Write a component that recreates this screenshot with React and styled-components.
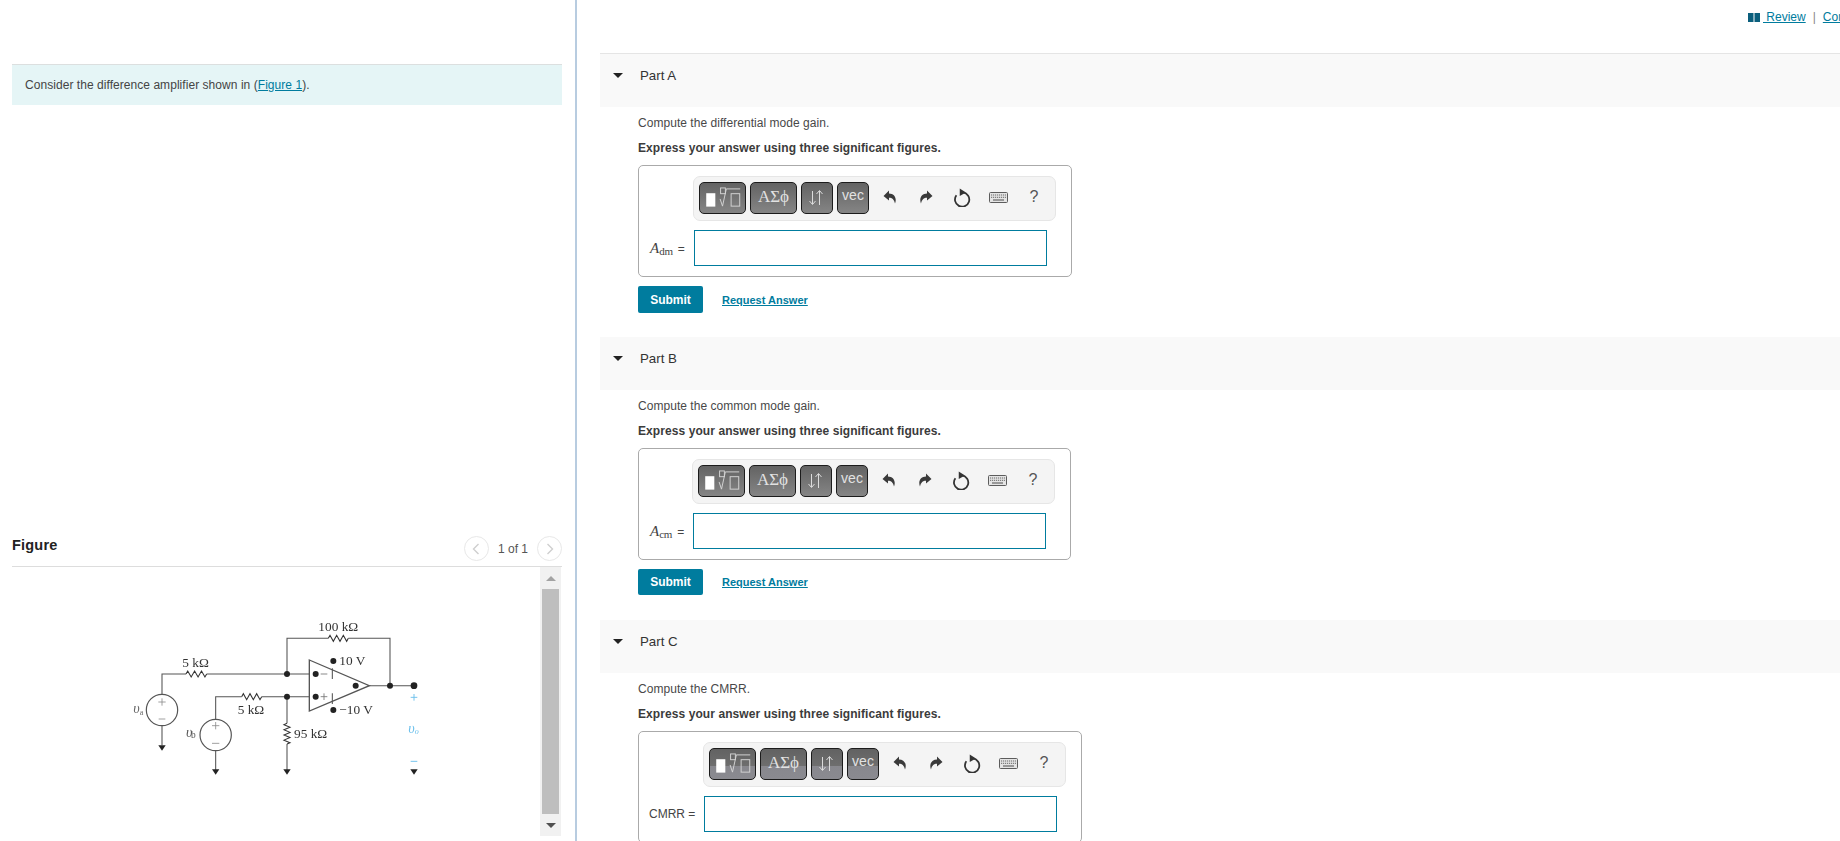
import React from "react";
import styled, { createGlobalStyle } from "styled-components";

const Global = createGlobalStyle`
  html, body { margin: 0; padding: 0; background: #fff; overflow: hidden; }
  body { font-family: "Liberation Sans", Arial, sans-serif; font-size: 12px; color: #444; }
`;

const Page = styled.div`
  display: flex;
  width: 1840px;
  height: 841px;
  overflow: hidden;
`;

const LeftColumn = styled.div`
  width: 575px;
  flex: none;
  display: flex;
  flex-direction: column;
  box-sizing: border-box;
  padding: 64px 13px 0 12px;
`;

const Intro = styled.div`
  height: 41px;
  box-sizing: border-box;
  background: #e5f5f6;
  border-top: 1px solid #dcdfdf;
  padding-left: 13px;
  display: flex;
  align-items: center;
  font-size: 12px;
  letter-spacing: 0.05px;
  color: #444;
`;

const Link = styled.a`
  color: #007c9e;
  text-decoration: underline;
`;

const FigureHead = styled.div`
  margin-top: 428px;
  height: 33px;
  box-sizing: content-box;
  border-bottom: 1px solid #dddddd;
  display: flex;
  align-items: flex-start;
  justify-content: space-between;
`;

const FigureTitle = styled.div`
  font-size: 14.5px;
  font-weight: 700;
  letter-spacing: 0.2px;
  color: #222;
  padding-top: 3px;
  line-height: 18px;
`;

const Pager = styled.div`
  display: flex;
  align-items: center;
  gap: 9px;
  font-size: 12px;
  color: #555;
  margin-top: 3px;
`;

const PagerText = styled.span`
  padding-top: 1px;
`;

const NavCircle = styled.span`
  width: 23px;
  height: 23px;
  border-radius: 50%;
  border: 1px solid #e8e8e8;
  display: flex;
  align-items: center;
  justify-content: center;
`;

const FigureBody = styled.div`
  display: flex;
  height: 269px;
  margin-right: 1px;
`;

const Canvas = styled.div`
  flex: 1;
  overflow: hidden;
  padding: 33px 0 0 88px;
`;

const Diagram = styled.svg`
  display: block;
  filter: blur(0.35px);
`;

const ScrollBar = styled.div`
  width: 21px;
  flex: none;
  background: #f1f1f1;
  display: flex;
  flex-direction: column;
  align-items: center;
`;

const ScrollEnd = styled.div`
  height: 22px;
  display: flex;
  align-items: center;
  justify-content: center;
`;

const ScrollArrow = styled.span`
  width: 0;
  height: 0;
  border-left: 5px solid transparent;
  border-right: 5px solid transparent;
  ${(p) => (p.$down ? "border-top: 5px solid #505050;" : "border-bottom: 5px solid #a3a3a3;")}
`;

const ScrollThumb = styled.div`
  width: 17px;
  flex: 1;
  background: #bebebe;
`;

const RightColumn = styled.div`
  flex: 1;
  border-left: 2px solid #b8cce0;
  min-width: 0;
  overflow: hidden;
`;

const TopBar = styled.div`
  height: 53px;
  box-sizing: border-box;
  padding: 10px 0 0 1171px;
  display: flex;
  align-items: flex-start;
  white-space: pre;
  font-size: 12px;
  line-height: 15px;
`;

const TopLink = styled.a`
  color: #007c9e;
  text-decoration: underline;
  flex: none;
`;

const Sep = styled.span`
  color: #888;
  margin: 0 7px;
  flex: none;
`;

const BookSvg = styled.svg`
  flex: none;
  margin: 3px 3px 0 0;
`;

const Parts = styled.div`
  margin-left: 23px;
`;

const Part = styled.section`
  height: ${(p) => (p.$ruled ? 284 : 283)}px;
`;

const PartHeader = styled.div`
  height: ${(p) => (p.$ruled ? 54 : 53)}px;
  background: #f9f9f9;
  ${(p) => p.$ruled && "border-top: 1px solid #e5e5e5;"}
  display: flex;
  align-items: flex-start;
  padding: 14px 0 0 13px;
  box-sizing: border-box;
`;

const Caret = styled.span`
  width: 0;
  height: 0;
  border-left: 5px solid transparent;
  border-right: 5px solid transparent;
  border-top: 5px solid #222;
  margin-top: 5px;
`;

const PartTitle = styled.span`
  margin-left: 17px;
  font-size: 13.3px;
  line-height: 16px;
  color: #333;
`;

const PartBody = styled.div`
  padding-left: 38px;
  padding-top: 6px;
`;

const Prompt = styled.div`
  font-size: 12px;
  line-height: 20px;
  letter-spacing: 0.04px;
  color: #484848;
`;

const Instruction = styled.div`
  font-size: 12px;
  line-height: 20px;
  font-weight: 700;
  letter-spacing: 0.08px;
  color: #3b3b3b;
  margin-top: 5px;
`;

const AnswerBox = styled.div`
  margin-top: 7px;
  width: fit-content;
  box-sizing: border-box;
  height: 112px;
  border: 1px solid #aaaaaa;
  border-radius: 5px;
  padding: 10px 15px 10px 10px;
  display: grid;
  grid-template-columns: ${(p) => p.$label}px 363px;
  grid-template-rows: 45px 36px;
  row-gap: 9px;
  column-gap: 8px;
`;

const Toolbar = styled.div`
  grid-column: 2;
  grid-row: 1;
  box-sizing: border-box;
  background: #f4f4f4;
  border: 1px solid #e6e6e6;
  border-radius: 7px;
  padding: 5px;
  display: flex;
  align-items: flex-start;
`;

const TemplateButtons = styled.div`
  display: flex;
  gap: 4px;
`;

const TemplateButton = styled.button`
  width: ${(p) => p.$w}px;
  height: 32px;
  padding: 0;
  margin: 0;
  box-sizing: border-box;
  border: 1px solid #1c1c1c;
  border-radius: 5px;
  background: ${(p) =>
    p.$split
      ? "linear-gradient(#626262 0%, #6e6e6e 56%, #88888e 56%, #8a8a90 100%)"
      : "linear-gradient(#636363, #858585)"};
  color: #e2e2e2;
  display: flex;
  align-items: center;
  justify-content: center;
`;

const GreekText = styled.span`
  font-family: "Liberation Serif", "DejaVu Serif", serif;
  font-size: 17px;
  line-height: 17px;
  margin-top: -4px;
`;

const VecText = styled.span`
  font-family: "Liberation Sans", Arial, sans-serif;
  font-size: 14px;
  line-height: 14px;
  margin-top: -7px;
`;

const ToolIcons = styled.div`
  display: flex;
  margin-left: 3px;
  height: 32px;
`;

const ToolIcon = styled.span`
  width: 36px;
  display: flex;
  align-items: center;
  justify-content: center;
  font-size: 16px;
  color: #555;
  padding-bottom: 2px;
  box-sizing: border-box;
`;

const MathLabel = styled.label`
  grid-column: 1;
  grid-row: 2;
  align-self: center;
  white-space: nowrap;
  font-size: 12px;
  color: #444;
  display: flex;
  align-items: baseline;
  justify-content: flex-start;
`;

const MathA = styled.i`
  font-family: "Liberation Serif", serif;
  font-size: 15px;
  margin-left: 1px;
`;

const MathSub = styled.span`
  font-family: "Liberation Serif", serif;
  font-size: 11px;
  letter-spacing: -0.2px;
  position: relative;
  top: 2px;
  margin-right: 5px;
`;

const AnswerInput = styled.input`
  grid-column: 2;
  grid-row: 2;
  margin: 0 0 0 1px;
  width: 353px;
  height: 36px;
  box-sizing: border-box;
  border: 1px solid #007c9e;
  background: #fff;
  outline: none;
`;

const ActionRow = styled.div`
  display: flex;
  align-items: center;
  margin-top: 9px;
`;

const Submit = styled.button`
  width: 65px;
  height: ${(p) => p.$h}px;
  padding: 0;
  border: none;
  border-radius: 2px;
  background: #007c9e;
  color: #fff;
  font-family: "Liberation Sans", Arial, sans-serif;
  font-size: 12px;
  font-weight: 700;
`;

const RequestLink = styled.a`
  margin-left: 19px;
  font-size: 11px;
  font-weight: 700;
  color: #007c9e;
  text-decoration: underline;
`;

const BookIcon = () => (
  <BookSvg width="12" height="9" viewBox="0 0 12 9">
    <rect x="0" y="0" width="5.5" height="9" fill="#0b5f7d" />
    <rect x="6.5" y="0" width="5.5" height="9" fill="#0b5f7d" />
  </BookSvg>
);

const Chevron = ({ left }) => (
  <svg width="8" height="12" viewBox="0 0 8 12">
    <path
      d={left ? "M6.5 1 L1.5 6 L6.5 11" : "M1.5 1 L6.5 6 L1.5 11"}
      fill="none"
      stroke="#cfcfcf"
      strokeWidth="1.4"
    />
  </svg>
);

const RootIcon = () => (
  <svg width="47" height="30" viewBox="0 0 47 30">
    <rect x="6.5" y="10" width="9.5" height="14" fill="#fff" />
    <rect x="21.5" y="4.5" width="5" height="6" fill="none" stroke="#d4d4d4" strokeWidth="1" />
    <path d="M21 16 L23.5 23.5 L27.5 5.5 L42 5.5" fill="none" stroke="#d4d4d4" strokeWidth="1" />
    <rect x="32.5" y="10.5" width="9" height="13" fill="none" stroke="#d4d4d4" strokeWidth="1" />
  </svg>
);

const ArrowsIcon = () => (
  <svg width="30" height="30" viewBox="0 0 30 30">
    <path
      d="M10.5 8 V21 M7.5 18 L10.5 21.5 L13.5 18 M17.5 22 V8 M14.5 11 L17.5 7.5 L20.5 11"
      fill="none"
      stroke="#dcdcdc"
      strokeWidth="1"
    />
  </svg>
);

const UndoIcon = ({ flip }) => (
  <svg width="14" height="14" viewBox="0 0 14 14">
    <path
      transform={flip ? "translate(14 0) scale(-1 1)" : undefined}
      d="M6 0.5 L0.5 6 L6 10.5 V7.8 C9.2 7.8 11 9.5 12 13.5 C14.2 8 11.2 3.4 6 3.4 Z"
      fill="#3a3a3a"
    />
  </svg>
);

const RefreshIcon = () => (
  <svg width="18" height="19" viewBox="0 0 16 17">
    <path d="M3 6.5 A6.4 6.4 0 1 0 9 4" fill="none" stroke="#333" strokeWidth="1.6" />
    <path d="M6 0.5 L11.5 4 L6 7.2 Z" fill="#333" />
  </svg>
);

const KeyboardIcon = () => (
  <svg width="19" height="11" viewBox="0 0 19 11">
    <rect x="0.5" y="0.5" width="18" height="10" rx="1" fill="#e4e4e4" stroke="#5c5c5c" />
    <path d="M2 3 H17 M2 5.3 H17" stroke="#666" strokeWidth="1" strokeDasharray="1.2 0.8" />
    <path d="M4 8 H15" stroke="#666" strokeWidth="1.2" />
  </svg>
);

const zigH = (x0, x1, y, amp = 9) => {
  const n = 6;
  const step = (x1 - x0) / n;
  let d = `M${x0} ${y}`;
  for (let i = 0; i < n; i++) {
    d += ` L${x0 + step * (i + 0.5)} ${y + (i % 2 ? amp : -amp)}`;
  }
  return d + ` L${x1} ${y}`;
};

const zigV = (x, y0, y1, amp = 9) => {
  const n = 8;
  const step = (y1 - y0) / n;
  let d = `M${x} ${y0}`;
  for (let i = 0; i < n; i++) {
    d += ` L${x + (i % 2 ? amp : -amp)} ${y0 + step * (i + 0.5)}`;
  }
  return d + ` L${x} ${y1}`;
};

const Ground = ({ x, y }) => <path d={`M${x - 11} ${y - 7} H${x + 11} L${x} ${y + 9} Z`} fill="#222" />;
const Node = ({ x, y, r = 9 }) => <circle cx={x} cy={y} r={r} fill="#222" />;

const SERIF = "Liberation Serif, serif";

const Circuit = () => (
  <Diagram width="360" height="236" viewBox="0 0 1080 708">
    <g fill="none" stroke="#555" strokeWidth="3.2">
      <path d="M186 283 V222 H258 M320 222 H628" />
      <path d="M347 358 V290 H425 M485 290 H628" />
      <path d="M561 222 V115 H685 M745 115 H870 V257" />
      <path d="M808 257 H942" />
      <path d="M186 377 V436 M347 452 V510 M561 290 V370 M561 432 V510" />
      <circle cx="186" cy="330" r="47" strokeWidth="3.6" />
      <circle cx="347" cy="405" r="47" strokeWidth="3.6" />
      <path d="M628 180 L808 257 L628 333 Z" strokeWidth="4" />
      <path d="M697 205 V237 M697 280 V312" />
      <path d={zigH(258, 320, 222)} stroke="#333" />
      <path d={zigH(425, 485, 290)} stroke="#333" />
      <path d={zigH(685, 745, 115)} stroke="#333" />
      <path d={zigV(561, 370, 432)} stroke="#333" />
      <path d="M175 306 H197 M186 295 V317 M176 357 H196 M336 377 H358 M347 366 V388 M336 430 H358" stroke="#888" strokeWidth="2.4" />
      <path d="M662 222 H682 M662 290 H682 M672 280 V300" stroke="#777" strokeWidth="2.6" />
      <path d="M932 292 H952 M942 282 V302 M932 484 H952" stroke="#6cc0ec" strokeWidth="2.8" />
    </g>
    <Node x={561} y={222} />
    <Node x={561} y={290} />
    <Node x={647} y={222} />
    <Node x={647} y={290} />
    <Node x={700} y={183} />
    <Node x={700} y={330} />
    <Node x={767} y={257} />
    <Node x={870} y={257} />
    <Node x={942} y={257} r={10} />
    <Ground x={186} y={443} />
    <Ground x={347} y={515} />
    <Ground x={561} y={515} />
    <Ground x={942} y={515} />
    <g fontFamily={SERIF} fontSize="40" fill="#333">
      <text x="655" y="94">100 kΩ</text>
      <text x="247" y="201">5 kΩ</text>
      <text x="413" y="341">5 kΩ</text>
      <text x="582" y="414">95 kΩ</text>
      <text x="718" y="196">10 V</text>
      <text x="718" y="342">−10 V</text>
      <text x="100" y="340" fontStyle="italic" fontSize="42" fill="#666">υ<tspan fontSize="24" fontStyle="normal" dy="4">a</tspan></text>
      <text x="258" y="410" fontStyle="italic" fontSize="42" fill="#555">υ<tspan fontSize="28" fontStyle="normal" dy="4" dx="-4">b</tspan></text>
      <text x="925" y="398" fontStyle="italic" fontSize="42" fill="#6cc0ec">υ<tspan fontSize="24" dy="5">o</tspan></text>
    </g>
  </Diagram>
);

const PartBlock = ({ name, ruled, prompt, label, labelWidth, split, submitHeight }) => (
  <Part $ruled={ruled}>
    <PartHeader $ruled={ruled}>
      <Caret />
      <PartTitle>{name}</PartTitle>
    </PartHeader>
    <PartBody>
      <Prompt>{prompt}</Prompt>
      <Instruction>Express your answer using three significant figures.</Instruction>
      <AnswerBox $label={labelWidth}>
        <Toolbar>
          <TemplateButtons>
            <TemplateButton $w={47} $split={split}><RootIcon /></TemplateButton>
            <TemplateButton $w={47} $split={split}><GreekText>ΑΣϕ</GreekText></TemplateButton>
            <TemplateButton $w={32} $split={split}><ArrowsIcon /></TemplateButton>
            <TemplateButton $w={32} $split={split}><VecText>vec</VecText></TemplateButton>
          </TemplateButtons>
          <ToolIcons>
            <ToolIcon><UndoIcon /></ToolIcon>
            <ToolIcon><UndoIcon flip /></ToolIcon>
            <ToolIcon><RefreshIcon /></ToolIcon>
            <ToolIcon><KeyboardIcon /></ToolIcon>
            <ToolIcon>?</ToolIcon>
          </ToolIcons>
        </Toolbar>
        <MathLabel>{label}</MathLabel>
        <AnswerInput aria-label={name} />
      </AnswerBox>
      {submitHeight && (
        <ActionRow>
          <Submit $h={submitHeight}>Submit</Submit>
          <RequestLink>Request Answer</RequestLink>
        </ActionRow>
      )}
    </PartBody>
  </Part>
);

export default function App() {
  return (
    <>
      <Global />
      <Page>
        <LeftColumn>
          <Intro>
            <span>
              Consider the difference amplifier shown in (<Link>Figure 1</Link>).
            </span>
          </Intro>
          <FigureHead>
            <FigureTitle>Figure</FigureTitle>
            <Pager>
              <NavCircle><Chevron left /></NavCircle>
              <PagerText>1 of 1</PagerText>
              <NavCircle><Chevron /></NavCircle>
            </Pager>
          </FigureHead>
          <FigureBody>
            <Canvas>
              <Circuit />
            </Canvas>
            <ScrollBar>
              <ScrollEnd><ScrollArrow /></ScrollEnd>
              <ScrollThumb />
              <ScrollEnd><ScrollArrow $down /></ScrollEnd>
            </ScrollBar>
          </FigureBody>
        </LeftColumn>
        <RightColumn>
          <TopBar>
            <BookIcon />
            <TopLink>{" Review"}</TopLink>
            <Sep>|</Sep>
            <TopLink>Constants</TopLink>
          </TopBar>
          <Parts>
            <PartBlock
              ruled
              name="Part A"
              prompt="Compute the differential mode gain."
              label={<><MathA>A</MathA><MathSub>dm</MathSub>=</>}
              labelWidth={36}
              submitHeight={27}
            />
            <PartBlock
              name="Part B"
              prompt="Compute the common mode gain."
              label={<><MathA>A</MathA><MathSub>cm</MathSub>=</>}
              labelWidth={35}
              submitHeight={26}
            />
            <PartBlock
              split
              name="Part C"
              prompt="Compute the CMRR."
              label="CMRR ="
              labelWidth={46}
            />
          </Parts>
        </RightColumn>
      </Page>
    </>
  );
}
